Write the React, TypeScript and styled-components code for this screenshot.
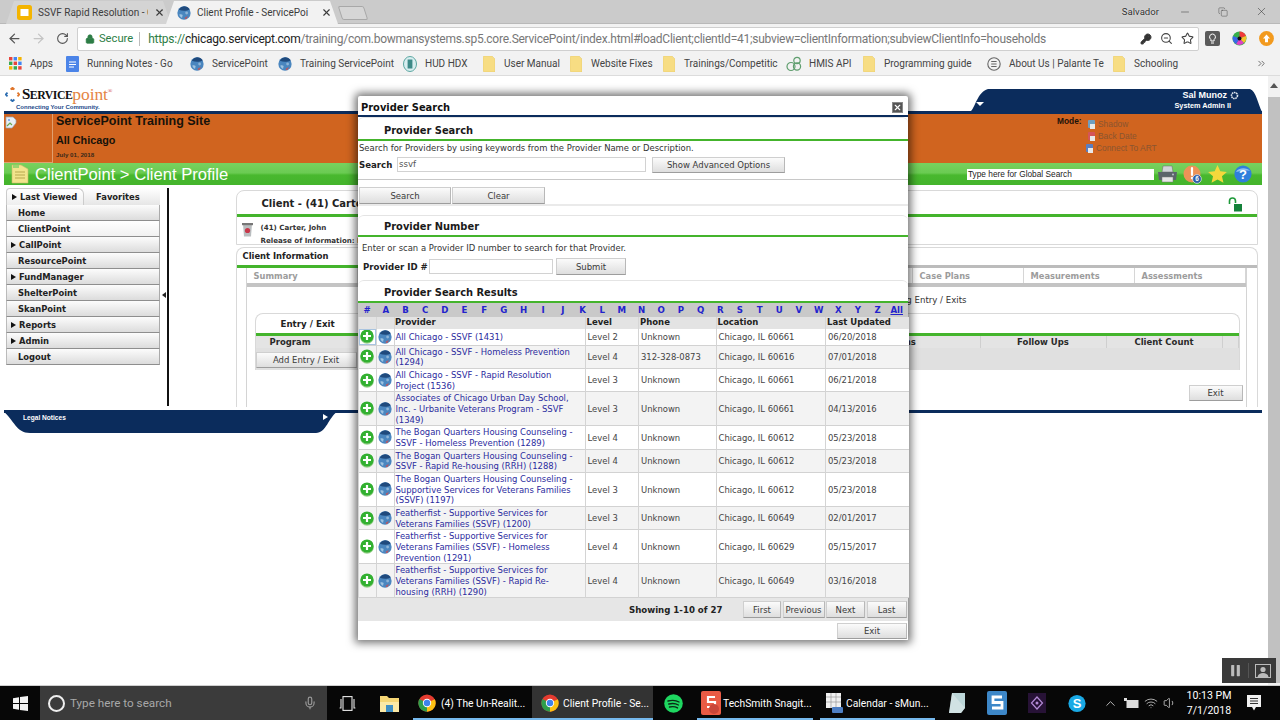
import React from "react";
import styled, { createGlobalStyle } from "styled-components";
import {
  ArrowLeft, ArrowRight, RotateCw, Lock, KeyRound, ZoomOut, Star, Minus, X, Copy, Mic, ChevronUp,
  Volume1, Wifi, ChevronsRight, Pause,
} from "lucide-react";

const Global = createGlobalStyle`
  html, body { margin: 0; padding: 0; width: 1280px; height: 720px; overflow: hidden; background: #fff; }
  * { box-sizing: border-box; }
  svg { flex: none; }
`;

const navy = "#0b2c5c";
const green = "#44b42c";
const ui = `Roboto, "Open Sans", sans-serif`;
const app = `"DejaVu Sans", Verdana, sans-serif`;
const arial = `"Liberation Sans", Arial, sans-serif`;

const Screen = styled.div`
  position: relative; width: 1280px; height: 720px; overflow: hidden; display: flex; flex-direction: column;
  background: #fff; font-family: ${app};
`;

/* ---------- browser chrome ---------- */
const TabStrip = styled.div`
  height: 24px; flex: none; background: #cbcbcb; display: flex; align-items: flex-end; padding-left: 6px; position: relative;
  border-bottom: 1px solid #b9b9b9;
`;
const Tab = styled.div<{ $active?: boolean; $w: number; $ml?: number }>`
  width: ${p => p.$w}px; margin-left: ${p => p.$ml ?? 0}px; height: 23px; display: flex; align-items: center; gap: 6px; padding: 0 6px 0 11px;
  background: ${p => (p.$active ? "#f2f2f2" : "#d4d4d4")};
  clip-path: polygon(0 100%, 8px 0, calc(100% - 8px) 0, 100% 100%);
  font: 10px ${ui}; color: #3c3c3c; white-space: nowrap; position: relative;
  margin-bottom: -1px;
`;
const TabLabel = styled.span`
  flex: 1; overflow: hidden; white-space: nowrap;
`;
const NewTab = styled.div`
  width: 26px; height: 14px; margin: 0 0 3px 2px; background: #d6d6d6; border: 1px solid #a8a8a8; transform: skewX(18deg); border-radius: 2px;
`;
const Profile = styled.span`
  margin-left: auto; margin-right: 7px; align-self: center; font: 9.6px ${ui}; color: #2b2b2b; text-shadow: 0 0 1px #fff;
`;
const WinBtn = styled.span`
  width: 38px; display: flex; justify-content: center; align-self: center; color: #333;
`;
const Toolbar = styled.div`
  height: 28px; flex: none; background: #f2f2f2; display: flex; align-items: center; padding: 0 0 0 3px; color: #5c5c5c;
`;
const NavBtn = styled.span<{ $dim?: boolean }>`
  width: 24px; display: flex; justify-content: center; color: ${p => (p.$dim ? "#c4c4c4" : "#555")};
`;
const Omnibox = styled.div`
  width: 1123px; height: 24px; margin: 1px 0 0 2px; background: #fff; border: 1px solid #cfcfcf; border-radius: 2px; display: flex; align-items: center;
  padding-left: 7px; font: 12px ${ui}; color: #777; white-space: nowrap; overflow: hidden;
`;
const Secure = styled.span`
  display: flex; align-items: center; gap: 4px; color: #2d7d46; font-size: 11.2px; padding-right: 6px; margin-right: 8px; border-right: 1px solid #bdbdbd; line-height: 14px;
`;
const Url = styled.span`
  flex: 1; letter-spacing: -0.26px;
  b { font-weight: 400; color: #2d7d46; }
  i { font-style: normal; color: #222; }
`;
const OmniIcon = styled.span`
  width: 21px; display: flex; justify-content: center; color: #444;
`;
const ExtSlot = styled.span`
  width: 27px; display: flex; justify-content: center;
`;
const ExtGroup = styled.div`
  display: flex;
`;
const Bookmarks = styled.div`
  height: 24px; flex: none; background: #f2f2f2; border-bottom: 1px solid #dcdcdc; display: flex; align-items: center; padding-left: 6px;
  font: 10px ${ui}; color: #444;
`;
const Bookmark = styled.div<{ $w: number }>`
  width: ${p => p.$w}px; flex: none; display: flex; align-items: center; gap: 7px; overflow: hidden; white-space: nowrap;
  padding-left: 1px;
`;
const BkIcon = styled.span`
  width: 16px; height: 16px; flex: none; display: flex; align-items: center; justify-content: center;
`;
const BkMore = styled.span`
  margin-left: auto; margin-right: 13px; color: #666; display: flex;
`;

/* ---------- page ---------- */
const Viewport = styled.div`
  flex: 1; min-height: 0; display: flex; background: #fff;
`;
const Page = styled.div`
  flex: 1; padding: 9px 6px 0 4px; display: flex; flex-direction: column; min-width: 0;
`;
const Scrollbar = styled.div`
  width: 12px; flex: none; background: #f1f1f1; display: flex; flex-direction: column;
`;
const ScrollArrow = styled.div`
  height: 21px; flex: none; display: flex; justify-content: center; padding-top: 7px;
`;
const ScrollThumb = styled.div`
  flex: 1; background: #c1c1c1; margin-bottom: 2px;
`;
const TopBar = styled.div`
  height: 29px; flex: none; display: flex; justify-content: space-between; align-items: flex-end; border-bottom: 3px solid ${navy};
`;
const Logo = styled.div`
  display: flex; flex-direction: column; padding-left: 1px; height: 26px;
`;
const LogoTop = styled.div`
  display: flex; align-items: center; gap: 2px; height: 18px; font-family: "Liberation Serif", serif; white-space: nowrap;
`;
const LogoService = styled.span`
  font-size: 15px; color: #111; font-weight: 700; letter-spacing: -0.5px;
  small { font-size: 11.8px; }
`;
const LogoPoint = styled.span`
  font-size: 17.5px; color: #e58544; letter-spacing: -0.1px; margin-left: -2px; sup { font-size: 6px; color: #c33; }
`;
const LogoTag = styled.div`
  font: 700 6px ${arial}; color: #1c4a8a; padding-left: 11px; line-height: 8px;
`;
const UserTab = styled.div`
  width: 292px; height: 23px; background: ${navy};
  clip-path: path("M0 23 C5 20 7 3 18 0 H280 C286 2 288 15 292 23 Z");
  margin-bottom: -1px; color: #fff; display: flex; align-items: flex-start; padding: 1px 23px 0 6px; position: relative; font-family: ${arial};
`;
const UserCaret = styled.span`
  width: 0; height: 0; border: 4px solid transparent; border-top: 4px solid #fff; border-bottom: 0; margin-top: 12px;
`;
const UserInfo = styled.div`
  margin-left: auto; text-align: right; line-height: 10px;
`;
const UserName = styled.div`
  font: 700 9px/10px ${arial}; display: flex; align-items: center; justify-content: flex-end; gap: 3px;
`;
const UserRole = styled.div`
  font: 700 7.3px/10px ${arial}; padding-right: 8px; margin-top: 1px;
`;
const Banner = styled.div`
  height: 49px; flex: none; background: #d0641f; display: flex; font-family: ${arial};
`;
const BannerImage = styled.div`
  width: 49px; flex: none; border-right: 1px solid #e0a070; padding: 1px; border-bottom: 1px solid #e0a070;
`;
const BannerText = styled.div`
  padding: 0 0 0 3px; flex: 1; color: #16120a;
`;
const SiteName = styled.div`
  font: 700 12.5px/14px ${arial};
`;
const OrgName = styled.div`
  font: 700 10.8px/14px ${arial}; margin-top: 5px;
`;
const SiteDate = styled.div`
  font: 700 6.2px/8px ${arial}; margin-top: 4px; color: #3a2a1a;
`;
const ModeBox = styled.div`
  width: 205px; flex: none; display: flex; color: #8a5530; font: 8.4px/12px ${arial}; padding-top: 2px;
`;
const ModeLabel = styled.div`
  font-weight: 700; color: #1d120a; width: 29px; line-height: 10px;
`;
const ModeList = styled.div`
  display: flex; flex-direction: column; padding-top: 2px;
`;
const ModeRow = styled.div<{ $ml: number }>`
  display: flex; align-items: center; gap: 2px; margin-left: ${p => p.$ml}px; height: 12px; white-space: nowrap;
`;
const GreenBar = styled.div`
  height: 22px; flex: none; background: linear-gradient(#78d15f 0, #6acb52 45%, #48b82e 55%, #44b42c 100%); display: flex; align-items: center;
  padding: 0 7px 0 7px; color: #fff; font: 16.6px ${arial};
`;
const BarTitle = styled.span`
  flex: 1; padding: 2px 0 0 6px;
`;
const GlobalSearch = styled.div`
  width: 187px; height: 11px; background: #fff; color: #222; font: 8.3px/11px ${arial}; padding-left: 1px; margin-right: 1px; white-space: nowrap;
`;
const BarIcon = styled.span`
  width: 25px; display: flex; justify-content: center;
`;
const Main = styled.div`
  height: 222px; flex: none; display: flex; padding: 3px 0 0 2px;
`;
const SideCol = styled.div`
  width: 154px; flex: none; display: flex; flex-direction: column;
`;
const SideTabs = styled.div`
  height: 17px; flex: none; display: flex; background: linear-gradient(#fff, #e6e6e6);
`;
const SideTab = styled.div<{ $active?: boolean }>`
  width: ${p => (p.$active ? 78 : 76)}px; display: flex; align-items: center; gap: 3px; font: 700 8.4px ${app}; color: #222; white-space: nowrap;
  padding-left: ${p => (p.$active ? 5 : 12)}px;
  ${p => p.$active && `border: 1px solid #ccc; border-bottom: 0; border-radius: 4px 6px 0 0; background: linear-gradient(#fff,#eee);`}
`;
const Caret = styled.span`
  width: 0; height: 0; border: 3.5px solid transparent; border-left: 5px solid #111; border-right: 0; flex: none;
`;
const SideItem = styled.div<{ $selected?: boolean; $caret?: boolean }>`
  height: 16px; flex: none; display: flex; align-items: center; gap: 3px; padding-left: ${p => (p.$caret ? 4 : 11)}px;
  background: ${p => (p.$selected ? "linear-gradient(#fff,#f1f1f1)" : "linear-gradient(#fcfcfc,#dcdcdc)")};
  border-bottom: 1px solid #8e8e8e; border-right: 1px solid #aaa; border-left: 1px solid #bbb;
  font: 700 8.4px ${app}; color: #222;
`;
const Handle = styled.div`
  width: 7px; flex: none; display: flex; align-items: center; justify-content: center; padding: 0 0 6px 0;
`;
const HandleArrow = styled.span`
  width: 0; height: 0; border: 3.5px solid transparent; border-right: 4px solid #222; border-left: 0;
`;
const Splitter = styled.div`
  width: 1.5px; flex: none; background: #111; height: 218px;
`;
const ContentCol = styled.div`
  width: 1022px; margin-left: 67px; display: flex; flex-direction: column; margin-top: 2px; font-family: ${app};
`;
const Card = styled.div`
  border: 1px solid #d9d9d9; border-radius: 8px 8px 0 0; background: #fff;
`;
const ClientCard = styled(Card)`
  height: 55px; flex: none; margin-bottom: 2px;
`;
const ClientHead = styled.div`
  height: 26px; border-bottom: 3px solid ${green}; display: flex; align-items: center; justify-content: space-between;
  font: 700 10px ${app}; color: #222; padding: 1px 14px 0 25px; white-space: nowrap;
`;
const LockSlot = styled.span`
  display: flex; margin-top: 3px;
`;
const ClientBody = styled.div`
  display: flex; padding: 5px 0 0 5px; gap: 8px; font: 700 7.1px/12.5px ${app}; color: #333; white-space: nowrap;
`;
const InfoCard = styled(Card)`
  flex: 1; border-bottom: 0; display: flex; flex-direction: column;
`;
const InfoHead = styled.div`
  height: 20px; flex: none; border-bottom: 3px solid; border-image: linear-gradient(to right, ${green} 55%, #bcbcbc 55%) 1;
  font: 700 8.4px/16px ${app}; color: #222; padding-left: 6px;
`;
const TabsWrap = styled.div`
  margin: 0 10px 0 9px; flex: 1; border-left: 1px solid #d4d4d4; border-right: 1px solid #d4d4d4; display: flex; flex-direction: column;
`;
const SubTabs = styled.div`
  height: 19px; flex: none; display: grid; grid-template-columns: repeat(9, 1fr); border-bottom: 4px solid #c4c4c4;
`;
const SubTab = styled.div`
  border-right: 1px solid #d6d6d6; font: 700 8.3px/17px ${app}; color: #9c9c9c; padding-left: 7px; white-space: nowrap; overflow: hidden;
`;
const Note = styled.div`
  width: 720px; text-align: right; font: 8.6px/13px ${app}; color: #333; padding-top: 7px; white-space: nowrap; height: 21px; margin-bottom: 5px;
`;
const InnerCard = styled.div`
  margin: 0 6px 0 8px; border: 1px solid #d9d9d9; border-bottom: 0; border-radius: 8px 8px 0 0; flex: none;
`;
const InnerHead = styled.div`
  height: 19px; padding-left: 25px; font: 700 8.7px/21px ${app}; color: #222;
`;
const InnerBar = styled.div`
  height: 3px; background: ${green};
`;
const InnerCols = styled.div`
  height: 12px; background: #e4e4e4; display: grid; grid-template-columns: 561px 164px 126px 116px 1fr; font: 700 8.5px/12px ${app}; color: #2a2a2a;
`;
const InnerCol = styled.div<{ $left?: boolean }>`
  text-align: ${p => (p.$left ? "left" : "center")}; padding-left: ${p => (p.$left ? 14 : 0)}px; border-right: 1px solid #cfcfcf;
  white-space: nowrap; overflow: hidden;
`;
const InnerRow = styled.div`
  height: 22px; background: #e0e0e0; padding: 4px 0 0 0;
`;
const GrayBtn = styled.div<{ $w: number; $h?: number; $ml?: number }>`
  width: ${p => p.$w}px; height: ${p => p.$h ?? 17}px; margin-left: ${p => p.$ml ?? 0}px; flex: none; display: flex; align-items: center; justify-content: center;
  background: linear-gradient(#fbfbfb, #dedede); border: 1px solid #cfcfcf; border-bottom-color: #9d9d9d; border-right-color: #b8b8b8;
  font: 8.5px ${app}; color: #3a3a3a; white-space: nowrap;
`;
const ExitRow = styled.div`
  display: flex; justify-content: flex-end; padding: 15px 3px 0 0;
`;
const Footer = styled.div`
  flex: none; margin-top: 3px; border-top: 3px solid ${navy};
`;
const LegalTab = styled.div`
  width: 333px; height: 21px; margin-top: -1px; background: ${navy};
  clip-path: path("M0 0 H333 C325 5 322 21 312 21 H26 C12 21 10 8 0 0 Z");
  display: flex; justify-content: space-between; padding: 0 9px 0 19px; color: #fff; font: 700 6.6px/11px ${arial};
`;
const LegalArrow = styled.span`
  width: 0; height: 0; border: 3.5px solid transparent; border-left: 5px solid #fff; border-right: 0; margin-top: 2px;
`;

/* ---------- dialog ---------- */
const Modal = styled.div`
  position: absolute; left: 358px; top: 96px; width: 550px; height: 544px; background: #fff; font-family: ${app}; color: #333;
  box-shadow: 0 0 9px 3px rgba(0,0,0,.55); border-radius: 2px 2px 0 0; display: flex; flex-direction: column;
`;
const ModalTitle = styled.div`
  height: 21px; flex: none; border-bottom: 2px solid ${navy}; display: flex; align-items: center; justify-content: space-between;
  padding: 3px 5px 0 3px; font: 700 9.9px ${app}; color: #111;
`;
const CloseX = styled.span`
  width: 11px; height: 11px; background: #555; color: #fff; display: flex; align-items: center; justify-content: center; border: 1px solid #888;
`;
const SectionHead = styled.div<{ $h: number; $pt: number }>`
  height: ${p => p.$h}px; flex: none; border-top: 1px solid #e4e4e4; border-radius: 6px 6px 0 0; border-bottom: 2px solid ${green};
  padding: ${p => p.$pt}px 0 0 26px; display: flex; align-items: center; font: 700 9.9px ${app}; color: #1a1a1a;
`;
const Desc = styled.div<{ $pl: number; $h: number; $lh: number }>`
  padding-left: ${p => p.$pl}px; height: ${p => p.$h}px; flex: none; font: 8.45px/${p => p.$lh}px ${app}; color: #333; white-space: nowrap;
`;
const SearchRow = styled.div`
  height: 17px; flex: none; display: flex; align-items: center; padding-left: 1px;
`;
const FieldLabel = styled.span<{ $w: number }>`
  width: ${p => p.$w}px; flex: none; font: 700 8.6px ${app}; color: #222; white-space: nowrap;
`;
const Field = styled.div<{ $w: number }>`
  width: ${p => p.$w}px; height: 15px; flex: none; border: 1px solid #d2d2d2; font: 8.6px/13px ${app}; color: #555; padding-left: 1px;
`;
const Rule = styled.div`
  height: 1px; flex: none; background: #c8c8c8; margin-top: 6px;
`;
const BtnRow = styled.div`
  height: 17px; flex: none; display: flex; gap: 1px; margin: 7px 0 0 1px; align-items: flex-start;
`;
const RowRule = styled.div`
  height: 2px; flex: none; background: #eaeaea; margin-bottom: 9px;
`;
const IdRow = styled.div`
  height: 22px; flex: none; display: flex; align-items: center; padding: 0 0 5px 5px;
`;
const AlphaBar = styled.div`
  height: 14px; flex: none; background: #c9c9c9; display: grid; grid-template-columns: 18px repeat(26, 19.68px) auto; font: 700 8.6px/14px ${app}; color: #2222cc;
`;
const AlphaCell = styled.span<{ $u?: boolean }>`
  text-align: center; text-decoration: ${p => (p.$u ? "underline" : "none")}; padding-right: ${p => (p.$u ? 2 : 0)}px;
`;
const Grid = styled.table`
  width: 550px; flex: none; border-collapse: collapse; table-layout: fixed; font: 8.45px/10.67px ${app}; color: #444;
`;
const HeadCell = styled.th<{ $tight?: boolean }>`
  height: 12px; padding: 0 0 1px ${p => (p.$tight ? 0 : 1)}px; background: #e3e3e3; text-align: left; font: 700 8.5px/11px ${app}; color: #222; border-left: 1px solid #d6d6d6; white-space: nowrap; overflow: hidden;
`;
const Row = styled.tr<{ $alt: boolean }>`
  background: ${p => (p.$alt ? "#f3f3f3" : "#fff")};
  border-bottom: 1px solid #d2d2d2;
`;
const Cell = styled.td`
  height: 16px; padding: 1px 0 0 2px; vertical-align: middle; border-left: 1px solid #d4d4d4; white-space: nowrap;
`;
const IconCell = styled(Cell)<{ $sel?: boolean }>`
  padding: 0; text-align: center; line-height: 0;
  ${p => p.$sel && `outline: 1px solid #a8c4e0; outline-offset: -1px;`}
`;
const ProviderLink = styled.span`
  color: #2b2b9e; display: block; margin-left: -1.5px;
`;
const Pager = styled.div`
  height: 23px; flex: none; background: #e6e6e6; display: flex; align-items: center; padding: 0 0 0 271px; gap: 1.5px;
`;
const PagerLabel = styled.span`
  width: 112.5px; flex: none; font: 700 8.6px ${app}; color: #222; white-space: nowrap;
`;
const ModalExit = styled.div`
  display: flex; justify-content: flex-end; padding: 2px 1px 0 0;
`;

/* ---------- overlay + taskbar ---------- */
const Recorder = styled.div`
  position: absolute; left: 1222px; top: 658px; width: 54px; height: 25px; background: #3a3a3a; display: flex; align-items: center; color: #bbb;
`;
const RecSlot = styled.span`
  width: 27px; display: flex; justify-content: center; &:first-child { border-right: 1px solid #555; }
`;
const Taskbar = styled.div`
  height: 35px; flex: none; background: #070707; border-top: 1px solid #cfcfcf; display: flex; align-items: stretch; color: #fff; font: 10.3px ${ui};
`;
const Start = styled.div`
  width: 40px; flex: none; display: flex; align-items: center; justify-content: center;
`;
const SearchBox = styled.div`
  width: 287px; flex: none; background: #3b3b3b; display: flex; align-items: center; padding: 0 10px 0 8px; gap: 4px; color: #a8a8a8; font-size: 11.7px;
`;
const Cortana = styled.span`
  width: 17px; height: 17px; border: 2px solid #eee; border-radius: 50%; flex: none; margin-right: 1px;
`;
const SearchText = styled.span`
  flex: 1;
`;
const TaskIcon = styled.div<{ $w?: number; $ml?: number }>`
  width: ${p => p.$w ?? 40}px; margin-left: ${p => p.$ml ?? 0}px; flex: none; display: flex; align-items: center; justify-content: center;
`;
const TaskApp = styled.div<{ $w: number; $active?: boolean; $ml?: number; $pl?: number; $gap?: number }>`
  width: ${p => p.$w}px; margin-left: ${p => p.$ml ?? 0}px; flex: none; display: flex; align-items: center; gap: ${p => p.$gap ?? 5}px; padding: 2px 0 0 ${p => p.$pl ?? 5}px; white-space: nowrap; overflow: hidden;
  border-bottom: 2px solid #76b9ed; background: ${p => (p.$active ? "#333" : "transparent")};
`;
const Tray = styled.div`
  flex: 1; display: flex; align-items: center; justify-content: flex-start; padding-left: 2px;
`;
const TraySlot = styled.span<{ $w: number }>`
  width: ${p => p.$w}px; display: flex; justify-content: center; color: #ddd; flex: none;
`;
const Clock = styled.div`
  width: 48px; margin-left: 6px; flex: none; text-align: center; font-size: 10.6px; line-height: 15px;
`;
const Notify = styled.div`
  width: 42px; display: flex; justify-content: center;
`;

/* ---------- drawn icons ---------- */
const ChromeIcon = ({ s = 16 }: { s?: number }) => (
  <svg width={s} height={s} viewBox="0 0 24 24">
    <circle cx="12" cy="12" r="11.5" fill="#e53b30" />
    <path d="M12 12 L22.4 7 A11.5 11.5 0 0 1 12 23.5 Z" fill="#fbc113" />
    <path d="M12 12 L12 23.5 A11.5 11.5 0 0 1 1.8 6.5 Z" fill="#2f9e4a" />
    <circle cx="12" cy="12" r="5.6" fill="#fff" />
    <circle cx="12" cy="12" r="4.3" fill="#3f83ea" />
  </svg>
);
const Globe = ({ s = 14 }: { s?: number }) => (
  <svg width={s} height={s} viewBox="0 0 16 16">
    <circle cx="8" cy="8" r="7.6" fill="#4a86bf" />
    <path d="M8 .4A7.6 7.6 0 0 1 14.5 4C11 6 6 6 2 4.2A7.6 7.6 0 0 1 8 .4Z" fill="#1f4a7d" />
    <path d="M2.5 10c1.5-1 3-.6 4 .4l-.8 3.4A7.6 7.6 0 0 1 2.5 10Z" fill="#9ec2e0" />
    <path d="M9 13l3.5-1.5L11 14.6A7.6 7.6 0 0 1 9 15.2Z" fill="#b35a66" />
    <circle cx="11" cy="8" r="1.6" fill="#8db4d8" />
  </svg>
);
const Folder = () => (
  <svg width="12" height="16" viewBox="0 0 12 16">
    <path d="M0 1.5C0 .7.7 0 1.5 0H9l3 3v13H1.5C.7 16 0 15.3 0 14.5Z" fill="#f7dd83" stroke="#e3c76b" strokeWidth=".5" />
  </svg>
);
const PlusCircle = () => (
  <svg width="14" height="15" viewBox="0 0 14 15">
    <ellipse cx="7" cy="8" rx="6.8" ry="6.8" fill="#9ad08c" />
    <circle cx="7" cy="7" r="6.6" fill="#32b030" />
    <path d="M3 7h8M7 3v8" stroke="#fff" strokeWidth="2.2" />
  </svg>
);
const Diamond = () => (
  <svg width="15" height="15" viewBox="0 0 15 15" fill="none" strokeWidth="1.8">
    <path d="M5.6 2.5 7.5.8l1.9 1.7" stroke="#e0762c" />
    <path d="M12.5 5.6l1.7 1.9-1.7 1.9" stroke="#e0762c" />
    <path d="M9.4 12.5l-1.9 1.7-1.9-1.7" stroke="#2b6cb0" />
    <path d="M2.5 9.4.8 7.5l1.7-1.9" stroke="#2b6cb0" />
  </svg>
);
const BrokenImg = () => (
  <svg width="13" height="13" viewBox="0 0 13 13">
    <path d="M1 1h7l3 3v3L7 12H1Z" fill="#e8eef6" stroke="#9aa6b4" strokeWidth=".7" />
    <path d="M2 10l3-3 2 2" stroke="#6aa84f" strokeWidth="1.2" fill="none" />
    <circle cx="4" cy="4" r="1" fill="#6d9eeb" />
  </svg>
);
const Notes = () => (
  <svg width="18" height="20" viewBox="0 0 18 20">
    <path d="M1 1h9l7 4v14H1Z" fill="#f2e48c" stroke="#c8ba6a" strokeWidth=".6" />
    <path d="M4 8h10M4 11h10M4 14h10" stroke="#b8a84e" strokeWidth="1" />
    <rect x="2" y="1" width="6" height="3" fill="#9bd46e" />
  </svg>
);
const Printer = () => (
  <svg width="21" height="18" viewBox="0 0 21 18">
    <path d="M6 1h9l1 6H5Z" fill="#cfd4d8" stroke="#666" strokeWidth=".5" />
    <path d="M1 7h19l-1 8H2Z" fill="#5c646b" />
    <rect x="5" y="12" width="11" height="5" fill="#e6e6e6" stroke="#777" strokeWidth=".5" />
    <circle cx="16" cy="9.5" r="1" fill="#b8c0c6" />
  </svg>
);
const AlertOrb = () => (
  <svg width="19" height="19" viewBox="0 0 19 19">
    <circle cx="9" cy="9" r="8.5" fill="#ec9257" />
    <path d="M9 3v7" stroke="#fff" strokeWidth="2.2" strokeLinecap="round" />
    <circle cx="9" cy="13" r="1.2" fill="#fff" />
    <circle cx="14" cy="14" r="4.4" fill="#2e5fa8" stroke="#fff" strokeWidth=".6" />
    <text x="14" y="16.2" fontSize="6.4" fontWeight="700" fill="#fff" textAnchor="middle" fontFamily="Liberation Sans">6</text>
  </svg>
);
const BigStar = () => (
  <svg width="19" height="18" viewBox="0 0 24 23">
    <path d="M12 0l3.6 8 8.4.8-6.3 5.6 1.9 8.4L12 18.4 4.4 22.8l1.9-8.4L0 8.8 8.4 8Z" fill="#f5d83c" />
  </svg>
);
const HelpOrb = () => (
  <svg width="18" height="18" viewBox="0 0 18 18">
    <circle cx="9" cy="9" r="8.6" fill="#2f7fdc" />
    <path d="M2 7C4 2.5 13 2 16 6 12 5 6 6 2 7Z" fill="#8fc2f2" />
    <text x="9" y="14" fontSize="13" fontWeight="700" fill="#fff" textAnchor="middle" fontFamily="Liberation Sans">?</text>
  </svg>
);
const OpenLock = () => (
  <svg width="15" height="15" viewBox="0 0 15 15">
    <path d="M1.5 7V4a3 3 0 0 1 6 0v2" fill="none" stroke="#1f9a3a" strokeWidth="1.6" />
    <rect x="6" y="7" width="8" height="7.5" fill="#14823a" />
  </svg>
);
const Cup = () => (
  <svg width="11" height="15" viewBox="0 0 11 15">
    <path d="M1 2h9l-1 12.5H2Z" fill="#b9bdbf" />
    <rect x="0" y="1" width="11" height="2.2" fill="#777" />
    <circle cx="5.5" cy="8.5" r="2.6" fill="#c8384a" />
  </svg>
);
const Gear = () => (
  <svg width="9" height="9" viewBox="0 0 9 9">
    <circle cx="4.5" cy="4.5" r="3" fill="none" stroke="#dfe6ee" strokeWidth="1.6" strokeDasharray="1.6 .6" />
  </svg>
);
const SmallMode = ({ c }: { c: string }) => (
  <svg width="9" height="11" viewBox="0 0 9 11">
    <rect x="1" y="1" width="7" height="8" rx="1" fill={c} />
    <rect x="3" y="5" width="5" height="5" fill="#e9e9e9" />
  </svg>
);
const DocIcon = () => (
  <svg width="13" height="16" viewBox="0 0 13 16">
    <rect width="13" height="16" rx="1" fill="#4b84e8" />
    <path d="M3 6h7M3 8.5h7M3 11h5" stroke="#fff" strokeWidth="1" />
  </svg>
);
const AppsGrid = () => (
  <svg width="13" height="13" viewBox="0 0 13 13">
    {["#e8453c", "#4285f4", "#f4b400", "#34a853", "#e8453c", "#4285f4", "#f4b400", "#34a853", "#e8453c"].map((c, i) => (
      <rect key={i} x={(i % 3) * 4.6} y={Math.floor(i / 3) * 4.6} width="3.4" height="3.4" fill={c} />
    ))}
  </svg>
);
const HudIcon = () => (
  <svg width="14" height="16" viewBox="0 0 14 16">
    <ellipse cx="7" cy="8" rx="6.5" ry="7.5" fill="#d8eef0" stroke="#5aa6a0" />
    <rect x="4.6" y="3.5" width="4.8" height="9" fill="#3d8a88" />
  </svg>
);
const HmisIcon = () => (
  <svg width="16" height="16" viewBox="0 0 16 16" fill="none" stroke="#5f9e6e" strokeWidth="1.2">
    <circle cx="5" cy="10.5" r="4" /><circle cx="11" cy="10.5" r="3.6" /><circle cx="11" cy="4.5" r="3.2" />
  </svg>
);
const PalanteIcon = () => (
  <svg width="14" height="14" viewBox="0 0 14 14" fill="none" stroke="#666" strokeWidth="1.1">
    <circle cx="7" cy="7" r="6.2" /><path d="M4.2 4.5h5.4M4.2 7h5.4M4.2 9.5h5.4" />
  </svg>
);
const SheetIcon = () => (
  <svg width="15" height="15" viewBox="0 0 15 15">
    <rect width="15" height="15" rx="2.5" fill="#f4b400" />
    <rect x="3.5" y="4" width="8" height="7" fill="#fff" />
  </svg>
);
const BulbExt = () => (
  <svg width="15" height="15" viewBox="0 0 15 15">
    <rect width="15" height="15" rx="2" fill="#5a5a5a" />
    <path d="M7.5 3a3 3 0 0 1 1.6 5.5V10H5.9V8.5A3 3 0 0 1 7.5 3Z" fill="none" stroke="#fff" strokeWidth="1" />
    <path d="M6 12h3" stroke="#fff" />
  </svg>
);
const WheelExt = () => (
  <svg width="15" height="15" viewBox="0 0 15 15">
    <circle cx="7.5" cy="7.5" r="7" fill="#36b04a" />
    <path d="M7.5 7.5V.5A7 7 0 0 1 14 5Z" fill="#f03a3a" />
    <path d="M7.5 7.5 14 5a7 7 0 0 1-2 7Z" fill="#f6c32c" />
    <path d="M7.5 7.5 12 12a7 7 0 0 1-8 1Z" fill="#e040c8" />
    <path d="M7.5 7.5 4 13a7 7 0 0 1-3-8Z" fill="#3a66e8" />
    <circle cx="7.5" cy="7.5" r="2" fill="#111" />
  </svg>
);
const UpdateExt = () => (
  <svg width="15" height="15" viewBox="0 0 15 15">
    <circle cx="7.5" cy="7.5" r="7.4" fill="#f29a1e" />
    <path d="M7.5 3.5 11 7.5H9v3.8H6V7.5H4Z" fill="#fff" />
  </svg>
);
const WinLogo = () => (
  <svg width="15" height="15" viewBox="0 0 15 15" fill="#f4f4f4">
    <path d="M0 2.2 6 1.3v5.8H0ZM7 1.1 15 0v7.1H7ZM0 8h6v5.7l-6-.9ZM7 8h8v7l-8-1.1Z" />
  </svg>
);
const TaskView = () => (
  <svg width="17" height="15" viewBox="0 0 17 15" fill="none" stroke="#e8e8e8" strokeWidth="1.1">
    <rect x="4" y=".6" width="9" height="13.8" /><path d="M2 3v9H.6M15 3v9h1.4" />
  </svg>
);
const Explorer = () => (
  <svg width="19" height="17" viewBox="0 0 19 17">
    <path d="M0 1h7l2 2h10v14H0Z" fill="#f6d775" />
    <rect y="7" width="19" height="10" fill="#fbe9a6" />
    <rect x="6" y="10" width="7" height="7" fill="#3f8fc4" />
  </svg>
);
const Spotify = () => (
  <svg width="19" height="19" viewBox="0 0 19 19" fill="none">
    <circle cx="9.5" cy="9.5" r="9.3" fill="#1ed760" />
    <path d="M4 7c4-1 8-.8 11 1M4.8 10c3.5-.8 7-.5 9.6 1M5.5 13c3-.6 5.8-.4 8 .9" stroke="#0b2b16" strokeWidth="1.4" strokeLinecap="round" />
  </svg>
);
const Snagit = () => (
  <svg width="20" height="24" viewBox="0 0 20 24">
    <rect width="20" height="24" rx="2" fill="#ea5b45" />
    <path d="M14 6H7v5h7v5H6" fill="none" stroke="#fff" strokeWidth="2.2" />
    <circle cx="13" cy="18" r="5" fill="#c9463a" />
  </svg>
);
const Calendar = () => (
  <svg width="18" height="22" viewBox="0 0 18 22">
    <rect y="1" width="15" height="15" fill="#f1f1f1" />
    <path d="M0 5h15M5 1v15M10 1v15M0 10h15" stroke="#999" strokeWidth=".7" />
    <rect x="6" y="15" width="11" height="6" rx="1" fill="#4e7fc4" />
  </svg>
);
const NoteApp = () => (
  <svg width="18" height="22" viewBox="0 0 18 22">
    <path d="M4 1h13v15L13 21H1Z" fill="#bcd6d8" />
    <path d="M4 1 1 21h12L17 16Z" fill="#dfeaeb" opacity=".6" />
  </svg>
);
const SIcon = () => (
  <svg width="20" height="24" viewBox="0 0 20 24">
    <rect width="20" height="24" rx="2" fill="#3d87c8" />
    <path d="M15 6H6v5.5h9V17H5" fill="none" stroke="#fff" strokeWidth="2.8" />
  </svg>
);
const PremIcon = () => (
  <svg width="18" height="20" viewBox="0 0 18 20">
    <rect width="18" height="20" fill="#271236" />
    <path d="M9 4l5.5 6L9 16l-5.5-6Z" fill="none" stroke="#b48ad6" strokeWidth="1.2" />
    <circle cx="9" cy="10" r="1.5" fill="#b48ad6" />
  </svg>
);
const Skype = () => (
  <svg width="18" height="19" viewBox="0 0 18 19">
    <circle cx="9" cy="9.5" r="8.6" fill="#19a9e5" />
    <text x="9" y="14" fontSize="13" fontWeight="700" fill="#fff" textAnchor="middle" fontFamily="Liberation Sans">S</text>
  </svg>
);
const Battery = () => (
  <svg width="15" height="11" viewBox="0 0 15 11">
    <rect x="2.5" y="2" width="12" height="8" fill="#ddd" />
    <rect x="0" y="0" width="3" height="3" fill="#ddd" />
  </svg>
);
const Balloon = () => (
  <svg width="14" height="16" viewBox="0 0 14 16">
    <path d="M0 0h14v12H9l-2 3.5L5 12H0Z" fill="#f1f1f1" />
    <path d="M3 3.5h8M3 6h8M3 8.5h8" stroke="#333" />
  </svg>
);
const Portrait = () => (
  <svg width="16" height="14" viewBox="0 0 16 14" fill="none">
    <rect x=".5" y=".5" width="15" height="13" stroke="#bbb" />
    <circle cx="8" cy="5.5" r="2.6" fill="#bbb" />
    <path d="M2.5 13c.5-3 3-4 5.5-4s5 1 5.5 4Z" fill="#bbb" />
  </svg>
);

/* ---------- data ---------- */
const bookmarks: [number, React.ReactNode, string][] = [
  [57, <AppsGrid />, "Apps"],
  [125, <DocIcon />, "Running Notes - Go"],
  [88, <Globe />, "ServicePoint"],
  [125, <Globe />, "Training ServicePoint"],
  [79, <HudIcon />, "HUD HDX"],
  [87, <Folder />, "User Manual"],
  [93, <Folder />, "Website Fixes"],
  [125, <Folder />, "Trainings/Competitic"],
  [75, <HmisIcon />, "HMIS API"],
  [125, <Folder />, "Programming guide"],
  [125, <PalanteIcon />, "About Us | Palante Te"],
  [90, <Folder />, "Schooling"],
];
const nav: [string, boolean, boolean?][] = [
  ["Home", false], ["ClientPoint", false, true], ["CallPoint", true], ["ResourcePoint", false], ["FundManager", true],
  ["ShelterPoint", false], ["SkanPoint", false], ["Reports", true], ["Admin", true], ["Logout", false],
];
const tabs = ["Summary", "Client Profile", "Households", "ROI", "Entry / Exit", "Case Managers", "Case Plans", "Measurements", "Assessments"];
const letters = "ABCDEFGHIJKLMNOPQRSTUVWXYZ".split("");
const rows: [string[], string, string, string, string][] = [
  [["All Chicago - SSVF (1431)"], "Level 2", "Unknown", "Chicago, IL 60661", "06/20/2018"],
  [["All Chicago - SSVF - Homeless Prevention", "(1294)"], "Level 4", "312-328-0873", "Chicago, IL 60616", "07/01/2018"],
  [["All Chicago - SSVF - Rapid Resolution", "Project (1536)"], "Level 3", "Unknown", "Chicago, IL 60661", "06/21/2018"],
  [["Associates of Chicago Urban Day School,", "Inc. - Urbanite Veterans Program - SSVF", "(1349)"], "Level 3", "Unknown", "Chicago, IL 60661", "04/13/2016"],
  [["The Bogan Quarters Housing Counseling -", "SSVF - Homeless Prevention (1289)"], "Level 4", "Unknown", "Chicago, IL 60612", "05/23/2018"],
  [["The Bogan Quarters Housing Counseling -", "SSVF - Rapid Re-housing (RRH) (1288)"], "Level 4", "Unknown", "Chicago, IL 60612", "05/23/2018"],
  [["The Bogan Quarters Housing Counseling -", "Supportive Services for Veterans Families", "(SSVF) (1197)"], "Level 3", "Unknown", "Chicago, IL 60612", "05/23/2018"],
  [["Featherfist - Supportive Services for", "Veterans Families (SSVF) (1200)"], "Level 3", "Unknown", "Chicago, IL 60649", "02/01/2017"],
  [["Featherfist - Supportive Services for", "Veterans Families (SSVF) - Homeless", "Prevention (1291)"], "Level 4", "Unknown", "Chicago, IL 60629", "05/15/2017"],
  [["Featherfist - Supportive Services for", "Veterans Families (SSVF) - Rapid Re-", "housing (RRH) (1290)"], "Level 4", "Unknown", "Chicago, IL 60649", "03/16/2018"],
];

export default function App() {
  return (
    <Screen>
      <Global />
      <TabStrip>
        <Tab $w={165}><SheetIcon /><TabLabel>SSVF Rapid Resolution - C</TabLabel><X size={11} strokeWidth={2.5} /></Tab>
        <Tab $active $w={172} $ml={-5}><Globe s={14} /><TabLabel>Client Profile - ServicePoi</TabLabel><X size={11} strokeWidth={2.5} /></Tab>
        <NewTab />
        <Profile>Salvador</Profile>
        <WinBtn><Minus size={12} strokeWidth={1} /></WinBtn>
        <WinBtn><Copy size={10} strokeWidth={1} /></WinBtn>
        <WinBtn><X size={13} strokeWidth={1} /></WinBtn>
      </TabStrip>
      <Toolbar>
        <NavBtn><ArrowLeft size={15} /></NavBtn>
        <NavBtn $dim><ArrowRight size={15} /></NavBtn>
        <NavBtn><RotateCw size={13} /></NavBtn>
        <Omnibox>
          <Secure><Lock size={10} fill="#2d7d46" />Secure</Secure>
          <Url><b>https://</b><i>chicago.servicept.com</i>/training/com.bowmansystems.sp5.core.ServicePoint/index.html#loadClient;clientId=41;subview=clientInformation;subviewClientInfo=households</Url>
          <OmniIcon><KeyRound size={12} fill="#333" /></OmniIcon>
          <OmniIcon><ZoomOut size={13} /></OmniIcon>
          <OmniIcon><Star size={13} /></OmniIcon>
        </Omnibox>
        <ExtGroup>
          <ExtSlot><BulbExt /></ExtSlot>
          <ExtSlot><WheelExt /></ExtSlot>
          <ExtSlot><UpdateExt /></ExtSlot>
        </ExtGroup>
      </Toolbar>
      <Bookmarks>
        {bookmarks.map(([w, ic, t]) => (
          <Bookmark key={t} $w={w}><BkIcon>{ic}</BkIcon>{t}</Bookmark>
        ))}
        <BkMore><ChevronsRight size={11} /></BkMore>
      </Bookmarks>
      <Viewport>
        <Page>
          <TopBar>
            <Logo>
              <LogoTop>
                <Diamond />
                <LogoService>S<small>ERVICE</small></LogoService>
                <LogoPoint>point<sup>®</sup></LogoPoint>
              </LogoTop>
              <LogoTag>Connecting Your Community.</LogoTag>
            </Logo>
            <UserTab>
              <UserCaret />
              <UserInfo>
                <UserName>Sal Munoz <Gear /></UserName>
                <UserRole>System Admin II</UserRole>
              </UserInfo>
            </UserTab>
          </TopBar>
          <Banner>
            <BannerImage><BrokenImg /></BannerImage>
            <BannerText>
              <SiteName>ServicePoint Training Site</SiteName>
              <OrgName>All Chicago</OrgName>
              <SiteDate>July 01, 2018</SiteDate>
            </BannerText>
            <ModeBox>
              <ModeLabel>Mode:</ModeLabel>
              <ModeList>
                <ModeRow $ml={1}><SmallMode c="#6f9fc0" />Shadow</ModeRow>
                <ModeRow $ml={1}><SmallMode c="#d4555a" />Back Date</ModeRow>
                <ModeRow $ml={-1}><SmallMode c="#5a7ec0" />Connect To ART</ModeRow>
              </ModeList>
            </ModeBox>
          </Banner>
          <GreenBar>
            <Notes />
            <BarTitle>ClientPoint &gt; Client Profile</BarTitle>
            <GlobalSearch>Type here for Global Search</GlobalSearch>
            <BarIcon><Printer /></BarIcon>
            <BarIcon><AlertOrb /></BarIcon>
            <BarIcon><BigStar /></BarIcon>
            <BarIcon><HelpOrb /></BarIcon>
          </GreenBar>
          <Main>
            <SideCol>
              <SideTabs>
                <SideTab $active><Caret />Last Viewed</SideTab>
                <SideTab>Favorites</SideTab>
              </SideTabs>
              {nav.map(([label, caret, sel]) => (
                <SideItem key={label} $caret={caret} $selected={sel}>{caret && <Caret />}{label}</SideItem>
              ))}
            </SideCol>
            <Handle><HandleArrow /></Handle>
            <Splitter />
            <ContentCol>
              <ClientCard>
                <ClientHead>Client - (41) Carter, John<LockSlot><OpenLock /></LockSlot></ClientHead>
                <ClientBody>
                  <Cup />
                  <div>(41) Carter, John<br />Release of Information: Expired</div>
                </ClientBody>
              </ClientCard>
              <InfoCard>
                <InfoHead>Client Information</InfoHead>
                <TabsWrap>
                  <SubTabs>{tabs.map(t => <SubTab key={t}>{t}</SubTab>)}</SubTabs>
                  <Note>Previous Year Outstanding Entry / Exits</Note>
                  <InnerCard>
                    <InnerHead>Entry / Exit</InnerHead>
                    <InnerBar />
                    <InnerCols>
                      <InnerCol $left>Program</InnerCol>
                      <InnerCol>Actions</InnerCol>
                      <InnerCol>Follow Ups</InnerCol>
                      <InnerCol>Client Count</InnerCol>
                      <InnerCol />
                    </InnerCols>
                    <InnerRow><GrayBtn $w={101} $h={16}>Add Entry / Exit</GrayBtn></InnerRow>
                  </InnerCard>
                  <ExitRow><GrayBtn $w={54} $h={16}>Exit</GrayBtn></ExitRow>
                </TabsWrap>
              </InfoCard>
            </ContentCol>
          </Main>
          <Footer>
            <LegalTab>Legal Notices<LegalArrow /></LegalTab>
          </Footer>
        </Page>
        <Scrollbar>
          <ScrollArrow><svg width="8" height="5" viewBox="0 0 8 5"><path d="M4 0 8 5H0Z" fill="#555" /></svg></ScrollArrow>
          <ScrollThumb />
        </Scrollbar>
      </Viewport>
      <Taskbar>
        <Start><WinLogo /></Start>
        <SearchBox><Cortana /><SearchText>Type here to search</SearchText><Mic size={14} color="#999" /></SearchBox>
        <TaskIcon><TaskView /></TaskIcon>
        <TaskIcon $w={44}><Explorer /></TaskIcon>
        <TaskApp $w={119} $ml={2}><ChromeIcon s={18} />(4) The Un-Realit...</TaskApp>
        <TaskApp $w={121} $active $pl={9} $gap={4}><ChromeIcon s={18} />Client Profile - Se...</TaskApp>
        <TaskIcon><Spotify /></TaskIcon>
        <TaskApp $w={116} $ml={4} $gap={2} $pl={4}><Snagit />TechSmith Snagit...</TaskApp>
        <TaskApp $w={115} $ml={7} $pl={6} $gap={2}><Calendar />Calendar - sMun...</TaskApp>
        <TaskIcon $ml={2}><NoteApp /></TaskIcon>
        <TaskIcon><SIcon /></TaskIcon>
        <TaskIcon><PremIcon /></TaskIcon>
        <TaskIcon><Skype /></TaskIcon>
        <Tray>
          <TraySlot $w={22}><ChevronUp size={15} strokeWidth={1.3} /></TraySlot>
          <TraySlot $w={20}><Battery /></TraySlot>
          <TraySlot $w={20}><Wifi size={14} strokeWidth={1.3} /></TraySlot>
          <TraySlot $w={18}><Volume1 size={14} strokeWidth={1.3} /></TraySlot>
          <Clock>10:13 PM<br />7/1/2018</Clock>
          <Notify><Balloon /></Notify>
        </Tray>
      </Taskbar>

      <Modal>
        <ModalTitle>Provider Search<CloseX><X size={9} strokeWidth={3} /></CloseX></ModalTitle>
        <SectionHead $h={24} $pt={3}>Provider Search</SectionHead>
        <Desc $pl={1} $h={15} $lh={14}>Search for Providers by using keywords from the Provider Name or Description.</Desc>
        <SearchRow>
          <FieldLabel $w={38}>Search</FieldLabel>
          <Field $w={249}>ssvf</Field>
          <GrayBtn $w={133} $h={16} $ml={6}>Show Advanced Options</GrayBtn>
        </SearchRow>
        <Rule />
        <BtnRow>
          <GrayBtn $w={92}>Search</GrayBtn>
          <GrayBtn $w={93}>Clear</GrayBtn>
        </BtnRow>
        <RowRule />
        <SectionHead $h={22} $pt={1}>Provider Number</SectionHead>
        <Desc $pl={4} $h={21} $lh={22}>Enter or scan a Provider ID number to search for that Provider.</Desc>
        <IdRow>
          <FieldLabel $w={66}>Provider ID #</FieldLabel>
          <Field $w={124} />
          <GrayBtn $w={70} $ml={3}>Submit</GrayBtn>
        </IdRow>
        <SectionHead $h={23} $pt={3}>Provider Search Results</SectionHead>
        <AlphaBar>
          <AlphaCell>#</AlphaCell>
          {letters.map(l => <AlphaCell key={l}>{l}</AlphaCell>)}
          <AlphaCell $u>All</AlphaCell>
        </AlphaBar>
        <Grid>
          <colgroup>
            {[17.5, 18.5, 190.5, 53.5, 77.5, 109.5, 83].map((w, i) => <col key={i} width={w} />)}
          </colgroup>
          <thead>
            <tr>
              <HeadCell /><HeadCell /><HeadCell $tight>Provider</HeadCell><HeadCell>Level</HeadCell><HeadCell>Phone</HeadCell><HeadCell>Location</HeadCell><HeadCell>Last Updated</HeadCell>
            </tr>
          </thead>
          <tbody>
            {rows.map(([lines, level, phone, loc, date], i) => (
              <Row key={i} $alt={i % 2 === 1}>
                <IconCell $sel={i === 0}><PlusCircle /></IconCell>
                <IconCell><Globe /></IconCell>
                <Cell><ProviderLink>{lines.map((l, j) => <React.Fragment key={j}>{j > 0 && <br />}{l}</React.Fragment>)}</ProviderLink></Cell>
                <Cell>{level}</Cell>
                <Cell>{phone}</Cell>
                <Cell>{loc}</Cell>
                <Cell>{date}</Cell>
              </Row>
            ))}
          </tbody>
        </Grid>
        <Pager>
          <PagerLabel>Showing 1-10 of 27</PagerLabel>
          <GrayBtn $w={38}>First</GrayBtn>
          <GrayBtn $w={42}>Previous</GrayBtn>
          <GrayBtn $w={39}>Next</GrayBtn>
          <GrayBtn $w={40}>Last</GrayBtn>
        </Pager>
        <ModalExit><GrayBtn $w={70} $h={16}>Exit</GrayBtn></ModalExit>
      </Modal>
      <Recorder>
        <RecSlot><Pause size={15} fill="#bbb" strokeWidth={0} /></RecSlot>
        <RecSlot><Portrait /></RecSlot>
      </Recorder>
    </Screen>
  );
}
